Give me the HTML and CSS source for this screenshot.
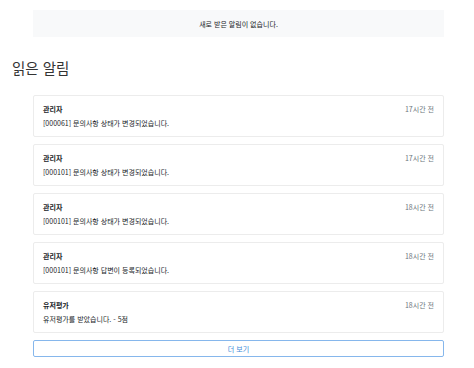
FILE: index.html
```html
<!DOCTYPE html>
<html lang="ko">

<head>
    <meta charset="UTF-8">
    <meta name="viewport" content="width=device-width, initial-scale=1.0">
    <title>알림</title>
    <link rel="stylesheet" href="styles.css">
</head>

<body>
    <div class="new-box">새로 받은 알림이 없습니다.</div>

    <h2 class="section-title">읽은 알림</h2>

    <div class="noti-list">
        <div class="noti">
            <div class="noti-head">
                <span class="noti-from">관리자</span>
                <span class="noti-time">17시간 전</span>
            </div>
            <div class="noti-msg">[000061] 문의사항 상태가 변경되었습니다.</div>
        </div>
        <div class="noti">
            <div class="noti-head">
                <span class="noti-from">관리자</span>
                <span class="noti-time">17시간 전</span>
            </div>
            <div class="noti-msg">[000101] 문의사항 상태가 변경되었습니다.</div>
        </div>
        <div class="noti">
            <div class="noti-head">
                <span class="noti-from">관리자</span>
                <span class="noti-time">18시간 전</span>
            </div>
            <div class="noti-msg">[000101] 문의사항 상태가 변경되었습니다.</div>
        </div>
        <div class="noti">
            <div class="noti-head">
                <span class="noti-from">관리자</span>
                <span class="noti-time">18시간 전</span>
            </div>
            <div class="noti-msg">[000101] 문의사항 답변이 등록되었습니다.</div>
        </div>
        <div class="noti">
            <div class="noti-head">
                <span class="noti-from">유저평가</span>
                <span class="noti-time">18시간 전</span>
            </div>
            <div class="noti-msg">유저평가를 받았습니다. - 5점</div>
        </div>

        <button class="more-btn">더 보기</button>
    </div>
</body>

</html>
```

FILE: styles.css
```css
body {
    margin: 0;
    font-family: "Noto Sans CJK KR", "Noto Sans", sans-serif;
    color: #212529;
    background: #fff;
}

.new-box {
    margin: 10px 30px 0 33px;
    height: 27px;
    background-color: #f8f9fa;
    font-size: 7px;
    display: flex;
    align-items: center;
    justify-content: center;
}

.section-title {
    margin: 19px 0 15px 12px;
    font-size: 14.5px;
    font-weight: 400;
    line-height: 24px;
    color: #333;
}

.noti-list {
    margin-left: 33px;
    width: 411px;
}

.noti {
    box-sizing: border-box;
    height: 42px;
    border: 1px solid #ececec;
    border-radius: 2px;
    padding: 7px 9px 0 9px;
    margin-bottom: 7px;
    font-size: 7px;
}

.noti-head {
    display: flex;
    justify-content: space-between;
    line-height: 13px;
}

.noti-from {
    font-weight: 700;
}

.noti-time {
    color: #6c757d;
}

.noti-msg {
    line-height: 14px;
}

.more-btn {
    display: block;
    width: 100%;
    height: 17px;
    padding: 0;
    background: #fff;
    border: 1px solid #86b7ec;
    border-radius: 2px;
    color: #3d8bd9;
    font-family: inherit;
    font-size: 7px;
    cursor: pointer;
}
```
